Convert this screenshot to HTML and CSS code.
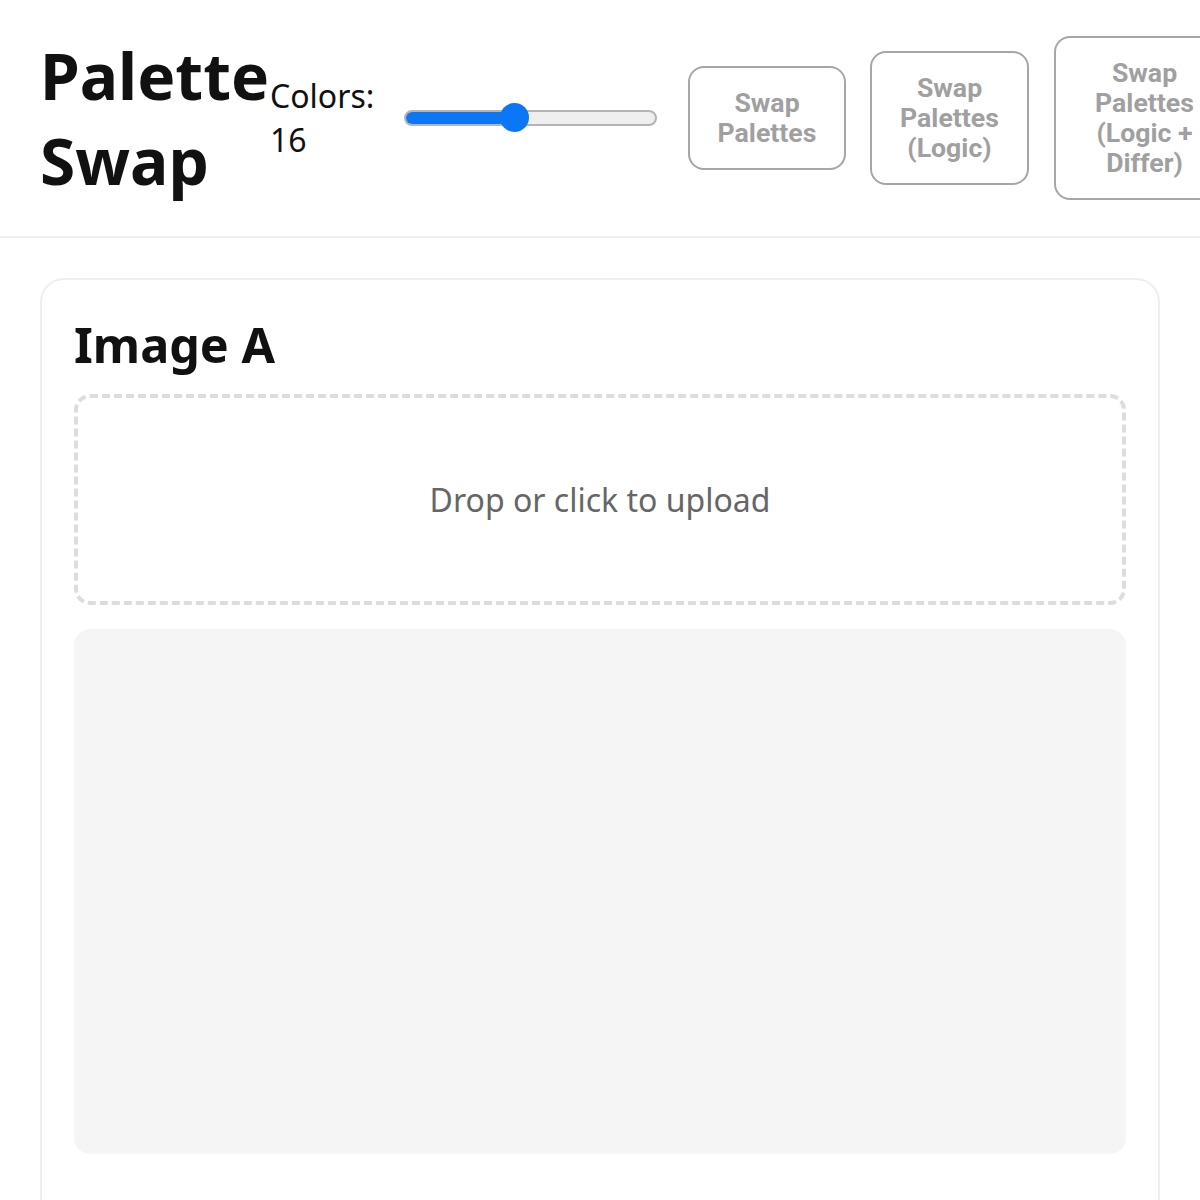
FILE: index.html
```html
<!DOCTYPE html>
<html lang="en">
<head>
<meta charset="utf-8">
<title>Palette Swap</title>
<link rel="stylesheet" href="styles.css">
</head>
<body>
<header class="topbar">
  <h1 class="title">Palette Swap</h1>
  <label class="count">Colors: 16</label>
  <div class="slider">
    <div class="slider-track">
      <div class="slider-fill" style="width: 43.5%"></div>
    </div>
    <div class="slider-thumb" style="left: 43.5%"></div>
  </div>
  <button class="btn btn-1" disabled>Swap Palettes</button>
  <button class="btn btn-2" disabled>Swap Palettes (Logic)</button>
  <button class="btn btn-3" disabled>Swap Palettes (Logic + Differ)</button>
</header>
<main class="main">
  <section class="card">
    <h2 class="card-title">Image A</h2>
    <div class="dropzone">Drop or click to upload</div>
    <div class="preview"></div>
  </section>
</main>
</body>
</html>
```
FILE: styles.css
```css
html, body {
  margin: 0;
  padding: 0;
  background: #fff;
  overflow-x: hidden;
}
body {
  font-family: "Noto Sans", "Open Sans", sans-serif;
  color: #111;
}
.topbar {
  display: flex;
  align-items: center;
  padding: 33px 0 33px 40px;
  border-bottom: 2px solid #eeeeee;
  overflow: hidden;
}
.title {
  flex: 0 0 auto;
  width: 230px;
  margin: 0;
  font-size: 64px;
  font-weight: 700;
  line-height: 85px;
  color: #111;
}
.count {
  flex: 0 0 auto;
  width: 130px;
  font-size: 32px;
  line-height: 44px;
  color: #111;
}
.slider {
  flex: 0 0 auto;
  position: relative;
  width: 253px;
  height: 30px;
  margin: 0 4px;
  display: flex;
  align-items: center;
}
.slider-track {
  width: 100%;
  height: 16px;
  box-sizing: border-box;
  border: 2px solid #b4b4b4;
  border-radius: 8px;
  background: #efefef;
  overflow: hidden;
  position: relative;
}
.slider-fill {
  height: 100%;
  background: #0b76f6;
  margin: -2px 0 0 -2px;
  padding: 2px 0 2px 2px;
}
.slider-thumb {
  position: absolute;
  top: 0;
  width: 29px;
  height: 29px;
  margin-left: -14px;
  border-radius: 50%;
  background: #0b76f6;
}
.btn {
  flex: 0 0 auto;
  box-sizing: border-box;
  font-family: Roboto, "Liberation Sans", sans-serif;
  font-weight: 700;
  font-size: 26.67px;
  line-height: 30px;
  color: #a0a0a0;
  background: #fff;
  border: 2px solid #a6a6a6;
  border-radius: 16px;
  padding: 20px 10px;
  text-align: center;
}
.btn-1 { width: 158px; margin-left: 27px; }
.btn-2 { width: 159px; margin-left: 24px; }
.btn-3 { width: 181px; margin-left: 25px; }
.main {
  padding: 40px;
}
.card {
  border: 2px solid #eeeeee;
  border-radius: 24px;
  padding: 32px 32px 80px;
}
.card-title {
  margin: 0 0 17px;
  font-size: 48.5px;
  font-weight: 700;
  line-height: 65px;
  color: #111;
}
.dropzone {
  box-sizing: border-box;
  height: 211px;
  border: 4px dashed #dddddd;
  border-radius: 16px;
  display: flex;
  align-items: center;
  justify-content: center;
  font-size: 32px;
  color: #666;
}
.preview {
  margin-top: 24px;
  height: 525px;
  background: #f5f5f5;
  border-radius: 16px;
}
```
